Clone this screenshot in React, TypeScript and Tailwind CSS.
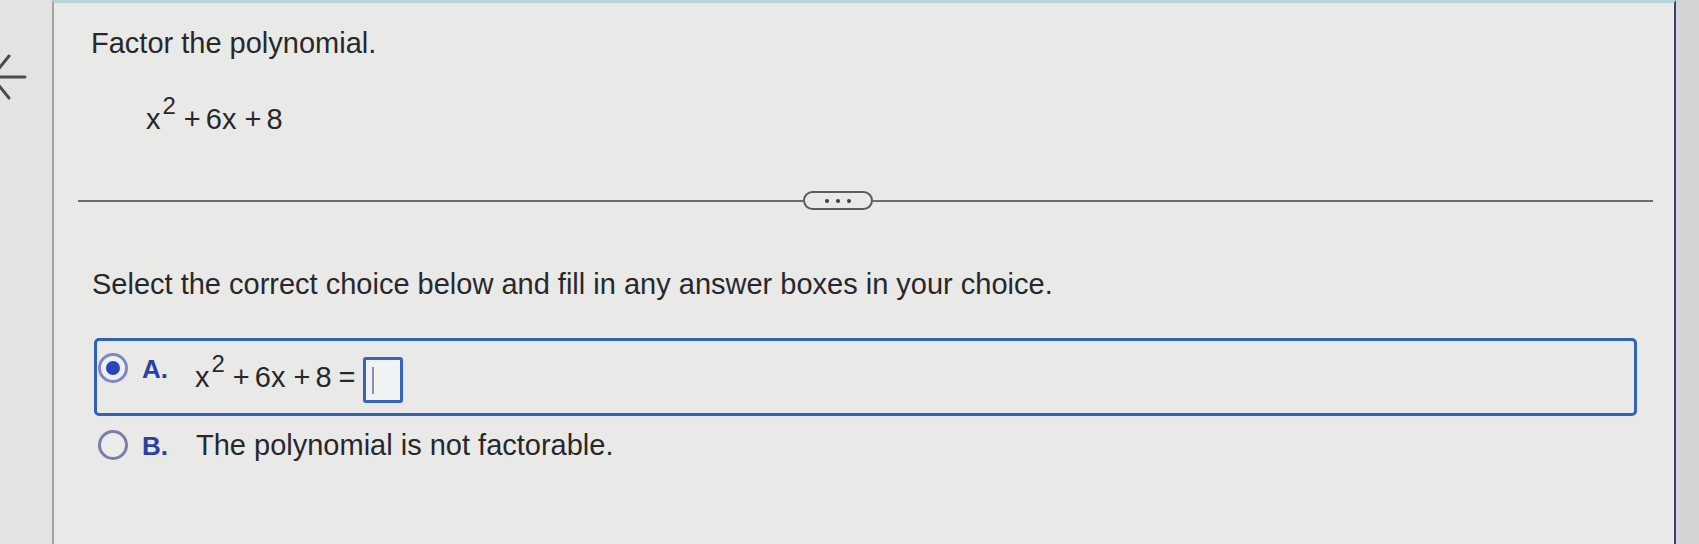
import React from "react"

const font = { fontFamily: '"Liberation Sans", Arial, sans-serif' }

function Poly() {
  return (
    <span className="whitespace-nowrap">
      <span>x</span>
      <span className="relative -top-[15px] ml-[2px] text-[24px]">2</span>
      <span className="ml-[8px]">+</span>
      <span className="ml-[5px]">6x</span>
      <span className="ml-[8px]">+</span>
      <span className="ml-[5px]">8</span>
    </span>
  )
}

function Radio({ checked }: { checked?: boolean }) {
  if (checked) {
    return (
      <div className="w-[30px] h-[30px] rounded-full border-[3px] border-[#7f87c4] bg-[#eef0f6] flex items-center justify-center shrink-0">
        <div className="w-[14px] h-[14px] rounded-full bg-[#2946bb]" />
      </div>
    )
  }
  return (
    <div className="w-[30px] h-[30px] rounded-full border-[3px] border-[#7a7eae] bg-[#ececea] shrink-0" />
  )
}

export default function App() {
  return (
    <div
      className="w-[1699px] h-[544px] flex bg-[#e3e4e2] text-[#28282c] overflow-hidden"
      style={font}
    >
      {/* left gutter with back arrow */}
      <div className="w-[52px] shrink-0 relative">
        <svg
          className="absolute left-0 top-[53px]"
          width="30"
          height="50"
          viewBox="0 0 30 50"
          fill="none"
          stroke="#4b4b52"
          strokeWidth="3"
          strokeLinecap="round"
        >
          <path d="M25 24H-6" />
          <path d="M9 3L-8 24L9 45" />
        </svg>
      </div>

      {/* main panel */}
      <div className="w-[1624px] shrink-0 flex flex-col bg-[#e9e9e7] border-l-2 border-l-[#a4a5ab] border-r-2 border-r-[#3c4070] border-t-[3px] border-t-[#b8d3da]">
        <div className="mt-[22px] ml-[37px] text-[29px] leading-[36px]">
          Factor the polynomial.
        </div>

        <div className="mt-[40px] ml-[92px] text-[29px] leading-[36px]">
          <Poly />
        </div>

        {/* divider */}
        <div className="mt-[52px] ml-[24px] w-[1575px] h-[19px] flex items-center">
          <div className="w-[725px] h-[2px] bg-[#6b6b72]" />
          <div className="w-[70px] h-[19px] shrink-0 rounded-full border-2 border-[#5b5b62] flex items-center justify-center gap-[7px]">
            <span className="w-[4px] h-[4px] rounded-full bg-[#3d3d44]" />
            <span className="w-[4px] h-[4px] rounded-full bg-[#3d3d44]" />
            <span className="w-[4px] h-[4px] rounded-full bg-[#3d3d44]" />
          </div>
          <div className="flex-1 h-[2px] bg-[#6b6b72]" />
        </div>

        <div className="mt-[56px] ml-[38px] text-[29px] leading-[36px]">
          Select the correct choice below and fill in any answer boxes in your choice.
        </div>

        {/* choice A */}
        <div className="mt-[36px] ml-[40px] w-[1543px] h-[78px] border-[3px] border-[#3162ba] rounded-[5px] flex items-start">
          <div className="mt-[12px] ml-[1px]">
            <Radio checked />
          </div>
          <div className="mt-[13px] ml-[14px] text-[26px] leading-[30px] font-bold text-[#2c3fa3]">
            A.
          </div>
          <div className="mt-[18px] ml-[27px] text-[29px] leading-[36px] whitespace-nowrap">
            <Poly />
            <span className="ml-[7px]">=</span>
          </div>
          <div className="mt-[16px] ml-[8px] w-[40px] h-[46px] border-[3px] border-[#3a63c0] rounded-[3px] bg-[#f1f2f4] flex items-center">
            <div className="ml-[6px] w-[2px] h-[27px] bg-[#8d8db4]" />
          </div>
        </div>

        {/* choice B */}
        <div className="mt-[11px] ml-[44px] flex items-start">
          <div className="mt-[3px]">
            <Radio />
          </div>
          <div className="mt-[4px] ml-[14px] text-[26px] leading-[30px] font-bold text-[#2c3fa3]">
            B.
          </div>
          <div className="ml-[28px] text-[29px] leading-[36px]">
            The polynomial is not factorable.
          </div>
        </div>
      </div>

      <div className="flex-1 bg-[#d3d5d4]" />
    </div>
  )
}
